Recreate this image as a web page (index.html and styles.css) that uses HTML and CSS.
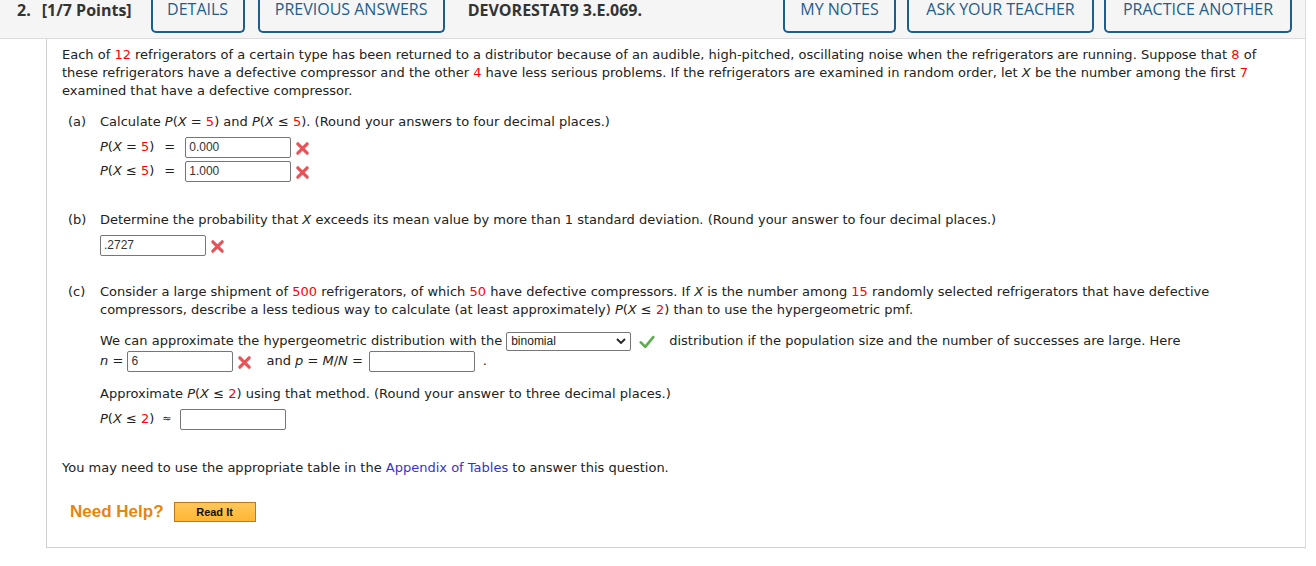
FILE: index.html
```html
<!DOCTYPE html>
<html>
<head>
<meta charset="utf-8">
<link rel="stylesheet" href="styles.css">
</head>
<body>
<div class="page">
  <div class="header">
    <span class="qnum">2.</span>
    <span class="points">[1/7 Points]</span>
    <span class="hbtn b-details">DETAILS</span>
    <span class="hbtn b-prev">PREVIOUS ANSWERS</span>
    <span class="code">DEVORESTAT9 3.E.069.</span>
    <span class="spacer"></span>
    <span class="hbtn b-notes">MY NOTES</span>
    <span class="hbtn b-ask">ASK YOUR TEACHER</span>
    <span class="hbtn b-practice">PRACTICE ANOTHER</span>
  </div>
  <div class="content">
    <p class="intro">Each of <span class="red">12</span> refrigerators of a certain type has been returned to a distributor because of an audible, high-pitched, oscillating noise when the refrigerators are running. Suppose that <span class="red">8</span> of these refrigerators have a defective compressor and the other <span class="red">4</span> have less serious problems. If the refrigerators are examined in random order, let <i>X</i> be the number among the first <span class="red">7</span> examined that have a defective compressor.</p>

    <div class="part part-a">
      <div class="plabel">(a)</div>
      <div class="pbody">
        <div class="line">Calculate <i>P</i>(<i>X</i> = <span class="red">5</span>) and <i>P</i>(<i>X</i> ≤ <span class="red">5</span>). (Round your answers to four decimal places.)</div>
        <div class="eqrow first"><span class="eqlabel"><i>P</i>(<i>X</i> = <span class="red">5</span>)</span><span class="eq">=</span><span class="inp">0.000</span><svg class="xmark" viewBox="0 0 16 16"><path d="M3 3 L13 13 M13 3 L3 13"/></svg></div>
        <div class="eqrow"><span class="eqlabel"><i>P</i>(<i>X</i> ≤ <span class="red">5</span>)</span><span class="eq">=</span><span class="inp">1.000</span><svg class="xmark" viewBox="0 0 16 16"><path d="M3 3 L13 13 M13 3 L3 13"/></svg></div>
      </div>
    </div>

    <div class="part part-b">
      <div class="plabel">(b)</div>
      <div class="pbody">
        <div class="line">Determine the probability that <i>X</i> exceeds its mean value by more than 1 standard deviation. (Round your answer to four decimal places.)</div>
        <div class="eqrow first"><span class="inp">.2727</span><svg class="xmark" viewBox="0 0 16 16"><path d="M3 3 L13 13 M13 3 L3 13"/></svg></div>
      </div>
    </div>

    <div class="part part-c">
      <div class="plabel">(c)</div>
      <div class="pbody">
        <div class="line">Consider a large shipment of <span class="red">500</span> refrigerators, of which <span class="red">50</span> have defective compressors. If <i>X</i> is the number among <span class="red">15</span> randomly selected refrigerators that have defective compressors, describe a less tedious way to calculate (at least approximately) <i>P</i>(<i>X</i> ≤ <span class="red">2</span>) than to use the hypergeometric pmf.</div>
        <div class="approx">
          <div class="arow">We can approximate the hypergeometric distribution with the <span class="sel">binomial<svg class="chev" viewBox="0 0 10 6"><path d="M1 1 L5 5 L9 1"/></svg></span><svg class="check" viewBox="0 0 18 16"><path d="M2 9 L7 14 L16 3"/></svg><span class="dist">distribution if the population size and the number of successes are large. Here</span></div>
          <div class="arow"><i>n</i>&nbsp;=&nbsp;<span class="inp">6</span><svg class="xmark" viewBox="0 0 16 16"><path d="M3 3 L13 13 M13 3 L3 13"/></svg><span class="andp">and <i>p</i> = <i>M</i>/<i>N</i> =</span><span class="inp inp-p"></span><span class="dot">.</span></div>
        </div>
        <div class="line line-approx">Approximate <i>P</i>(<i>X</i> ≤ <span class="red">2</span>) using that method. (Round your answer to three decimal places.)</div>
        <div class="eqrow first"><span class="eqlabel"><i>P</i>(<i>X</i> ≤ <span class="red">2</span>)</span><span class="eq approxsym">≈</span><span class="inp"></span></div>
      </div>
    </div>

    <p class="note">You may need to use the appropriate table in the <span class="link">Appendix of Tables</span> to answer this question.</p>

    <div class="help">
      <span class="needhelp">Need Help?</span>
      <span class="readit">Read It</span>
    </div>
  </div>
</div>
</body>
</html>
```

FILE: styles.css
```css
html, body {
  margin: 0;
  padding: 0;
  background: #ffffff;
}
body {
  font-family: "DejaVu Sans", sans-serif;
  font-size: 13px;
  color: #222;
}
.page {
  width: 1306px;
  box-sizing: border-box;
  border-right: 1px solid #dcdcdc;
  height: 549px;
}
.header {
  height: 38px;
  background: #f5f5f5;
  border-bottom: 1px solid #dcdcdc;
  display: flex;
  align-items: flex-start;
  font-family: "Open Sans", sans-serif;
  font-size: 16px;
  white-space: nowrap;
}
.qnum {
  font-weight: 700;
  color: #333;
  margin-left: 17px;
  line-height: 20px;
}
.points {
  font-weight: 700;
  color: #333;
  margin-left: 11px;
  line-height: 20px;
}
.hbtn {
  box-sizing: border-box;
  height: 33px;
  border: 2px solid #1e5d8c;
  border-top: none;
  border-radius: 0 0 5px 5px;
  color: #1e5d8c;
  font-weight: 500;
  line-height: 18px;
  padding: 0;
  display: flex;
  justify-content: center;
  align-items: flex-start;
}
.b-details { margin-left: 19px; width: 94px; }
.b-prev { margin-left: 13px; width: 187px; }
.code {
  font-weight: 700;
  color: #333;
  margin-left: 23px;
  line-height: 20px;
}
.spacer { flex: 1; }
.b-notes { width: 113px; }
.b-ask { margin-left: 11px; width: 187px; }
.b-practice { margin-left: 10px; width: 188px; margin-right: 13px; }

.content {
  margin-left: 46px;
  border-left: 1px solid #d0d0d0;
  border-bottom: 1px solid #d0d0d0;
  height: 509px;
  box-sizing: border-box;
  padding: 7px 14px 0 15px;
  line-height: 18px;
}
.intro { margin: 0; }
.red { color: #ff0000; }
.part {
  display: flex;
  margin-left: 6px;
}
.plabel { width: 32px; flex: none; }
.pbody { flex: 1; }
.part-a { margin-top: 13px; }
.part-b { margin-top: 28px; }
.part-c { margin-top: 26px; }
.eqrow {
  display: flex;
  align-items: center;
  height: 24px;
}
.eqrow.first { margin-top: 4px; }
.eqlabel { display: inline-block; }
.eq { margin: 0 10px 0 10px; }
.inp {
  display: inline-block;
  box-sizing: border-box;
  width: 106px;
  height: 21px;
  border: 1px solid #767676;
  border-radius: 2px;
  font-family: "Liberation Sans", Arial, sans-serif;
  font-size: 12px;
  line-height: 19px;
  padding-left: 3px;
  color: #333;
}
.xmark {
  width: 15px;
  height: 15px;
  margin-left: 4px;
  margin-top: 3px;
}
.xmark path {
  stroke: #e6545a;
  stroke-width: 3.4;
  fill: none;
  stroke-linecap: round;
}
.approx { margin-top: 12px; }
.arow {
  display: flex;
  align-items: center;
  height: 20px;
}
.sel {
  display: inline-flex;
  align-items: center;
  justify-content: space-between;
  box-sizing: border-box;
  width: 125px;
  height: 19px;
  border: 1px solid #767676;
  border-radius: 2px;
  font-family: "Liberation Sans", Arial, sans-serif;
  font-size: 12px;
  padding: 0 4px 0 4px;
  margin-left: 4px;
  color: #222;
}
.chev { width: 10px; height: 6px; }
.chev path { stroke: #222; stroke-width: 1.8; fill: none; }
.check { width: 16px; height: 15px; margin-left: 8px; }
.check path { stroke: #5cae4a; stroke-width: 3; fill: none; stroke-linejoin: round; stroke-linecap: round; }
.dist { margin-left: 14px; }
.andp { margin-left: 14px; margin-right: 6px; }
.dot { margin-left: 8px; }
.line-approx { margin-top: 14px; }
.approxsym { font-size: 11px; margin: 0 8px 0 8px; }
.note { margin: 28px 0 0 0; }
.link { color: #3333cc; }
.help {
  display: flex;
  align-items: center;
  margin-top: 25px;
  margin-left: 8px;
}
.needhelp {
  font-family: "Liberation Sans", Arial, sans-serif;
  font-weight: 700;
  font-size: 17px;
  color: #e8850c;
}
.readit {
  margin-left: 10px;
  box-sizing: border-box;
  width: 82px;
  height: 20px;
  border: 1px solid #c3761a;
  background: linear-gradient(#ffc85a, #ffb534);
  font-family: "Liberation Sans", Arial, sans-serif;
  font-weight: 700;
  font-size: 11px;
  color: #111;
  display: flex;
  align-items: center;
  justify-content: center;
}
```
